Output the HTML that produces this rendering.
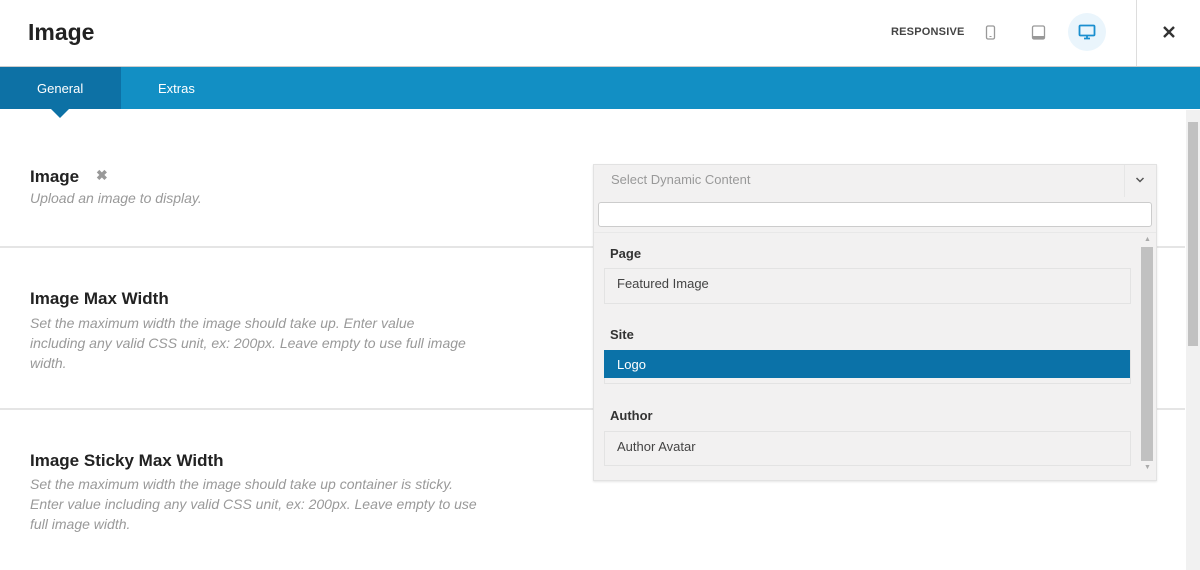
<!DOCTYPE html>
<html><head><style>
*{box-sizing:border-box;margin:0;padding:0}
body{width:1200px;height:570px;overflow:hidden;background:#fff;font-family:"Liberation Sans",sans-serif;position:relative;color:#333}
.a{position:absolute}
</style></head><body>
<div class="a" style="left:28px;top:19px;font-size:23px;font-weight:bold;color:#222">Image</div>
<div class="a" style="left:891px;top:26px;font-size:11px;font-weight:bold;color:#444;letter-spacing:.2px">RESPONSIVE</div>
<svg class="a" style="left:985px;top:25px" width="12" height="15" viewBox="0 0 12 15"><rect x="1.5" y="1" width="8" height="13" rx="1.5" fill="none" stroke="#999" stroke-width="1.3"/><rect x="4.5" y="11" width="2" height="1" fill="#999"/></svg>
<svg class="a" style="left:1031px;top:25px" width="16" height="15" viewBox="0 0 16 15"><rect x="1.5" y="1" width="12" height="13" rx="1.5" fill="none" stroke="#999" stroke-width="1.3"/><rect x="2" y="11" width="11" height="3" fill="#999"/></svg>
<div class="a" style="left:1068px;top:13px;width:38px;height:38px;border-radius:50%;background:#eaf5fc"></div>
<svg class="a" style="left:1078px;top:24px" width="18" height="16" viewBox="0 0 18 16"><rect x="1.5" y="1.5" width="15" height="10" rx="1" fill="none" stroke="#1a8fcf" stroke-width="1.8"/><path d="M6 14.5h6M9 12v2.5" stroke="#1a8fcf" stroke-width="1.8"/></svg>
<div class="a" style="left:1136px;top:0;width:1px;height:66px;background:#ddd"></div>
<svg class="a" style="left:1163px;top:26px" width="12" height="12"><path d="M1 1L11 11M11 1L1 11" stroke="#333" stroke-width="2.4"/></svg>
<div class="a" style="left:0;top:66px;width:1200px;height:1px;background:#ccc"></div>
<div class="a" style="left:0;top:67px;width:1200px;height:42px;background:#128fc4"></div>
<div class="a" style="left:0;top:67px;width:121px;height:42px;background:#0d71a5"></div>
<div class="a" style="left:51px;top:109px;width:0;height:0;border-left:9px solid transparent;border-right:9px solid transparent;border-top:9px solid #0d71a5"></div>
<div class="a" style="left:37px;top:81px;font-size:13px;color:#fff">General</div>
<div class="a" style="left:158px;top:81px;font-size:13px;color:#fff">Extras</div>

<div class="a" style="left:30px;top:167px;font-size:17px;font-weight:bold;color:#222">Image</div>
<div class="a" style="left:96px;top:167px;font-size:14px;font-weight:bold;color:#999">✖</div>
<div class="a" style="left:30px;top:190px;font-size:14px;font-style:italic;color:#999">Upload an image to display.</div>
<div class="a" style="left:0;top:246px;width:1185px;height:2px;background:#e5e5e5"></div>
<div class="a" style="left:30px;top:289px;font-size:17px;font-weight:bold;color:#222">Image Max Width</div>
<div class="a" style="left:30px;top:313px;width:436px;font-size:14px;line-height:20px;font-style:italic;color:#999">Set the maximum width the image should take up. Enter value including any valid CSS unit, ex: 200px. Leave empty to use full image width.</div>
<div class="a" style="left:0;top:408px;width:1185px;height:2px;background:#e5e5e5"></div>
<div class="a" style="left:30px;top:451px;font-size:17px;font-weight:bold;color:#222">Image Sticky Max Width</div>
<div class="a" style="left:30px;top:474px;width:455px;font-size:14px;line-height:20px;font-style:italic;color:#999">Set the maximum width the image should take up container is sticky. Enter value including any valid CSS unit, ex: 200px. Leave empty to use full image width.</div>

<div class="a" style="left:1186px;top:110px;width:14px;height:460px;background:#f1f1f1"></div>
<div class="a" style="left:1188px;top:122px;width:10px;height:224px;background:#c1c1c1"></div>

<div class="a" style="left:593px;top:164px;width:564px;height:317px;background:#f2f1f1;border:1px solid #e2e2e2;box-shadow:0 1px 2px rgba(0,0,0,.1)"></div>
<div class="a" style="left:1124px;top:165px;width:1px;height:32px;background:#e6e6e6"></div>
<div class="a" style="left:611px;top:172px;font-size:13px;color:#999">Select Dynamic Content</div>
<svg class="a" style="left:1135px;top:176px" width="10" height="8"><path d="M1.5 2L5 5.5L8.5 2" stroke="#555" stroke-width="1.5" fill="none"/></svg>
<div class="a" style="left:598px;top:202px;width:554px;height:25px;background:#fff;border:1px solid #ccc;border-radius:3px"></div>
<div class="a" style="left:594px;top:232px;width:562px;height:1px;background:#e8e8e8"></div>
<div class="a" style="left:1141px;top:247px;width:12px;height:214px;background:#c1c1c1"></div>
<div class="a" style="left:1144px;top:236px;font-size:7px;color:#aaa">▲</div>
<div class="a" style="left:1144px;top:464px;font-size:7px;color:#aaa">▼</div>
<div class="a" style="left:610px;top:246px;font-size:13px;font-weight:bold;color:#333">Page</div>
<div class="a" style="left:604px;top:268px;width:527px;height:36px;border:1px solid #e3e3e3"></div>
<div class="a" style="left:617px;top:276px;font-size:13px;color:#444">Featured Image</div>
<div class="a" style="left:610px;top:327px;font-size:13px;font-weight:bold;color:#333">Site</div>
<div class="a" style="left:604px;top:350px;width:527px;height:34px;border:1px solid #e3e3e3"></div>
<div class="a" style="left:604px;top:350px;width:526px;height:28px;background:#0b72a8"></div>
<div class="a" style="left:617px;top:357px;font-size:13px;color:#fff">Logo</div>
<div class="a" style="left:610px;top:408px;font-size:13px;font-weight:bold;color:#333">Author</div>
<div class="a" style="left:604px;top:431px;width:527px;height:35px;border:1px solid #e3e3e3"></div>
<div class="a" style="left:617px;top:439px;font-size:13px;color:#444">Author Avatar</div>
</body></html>
